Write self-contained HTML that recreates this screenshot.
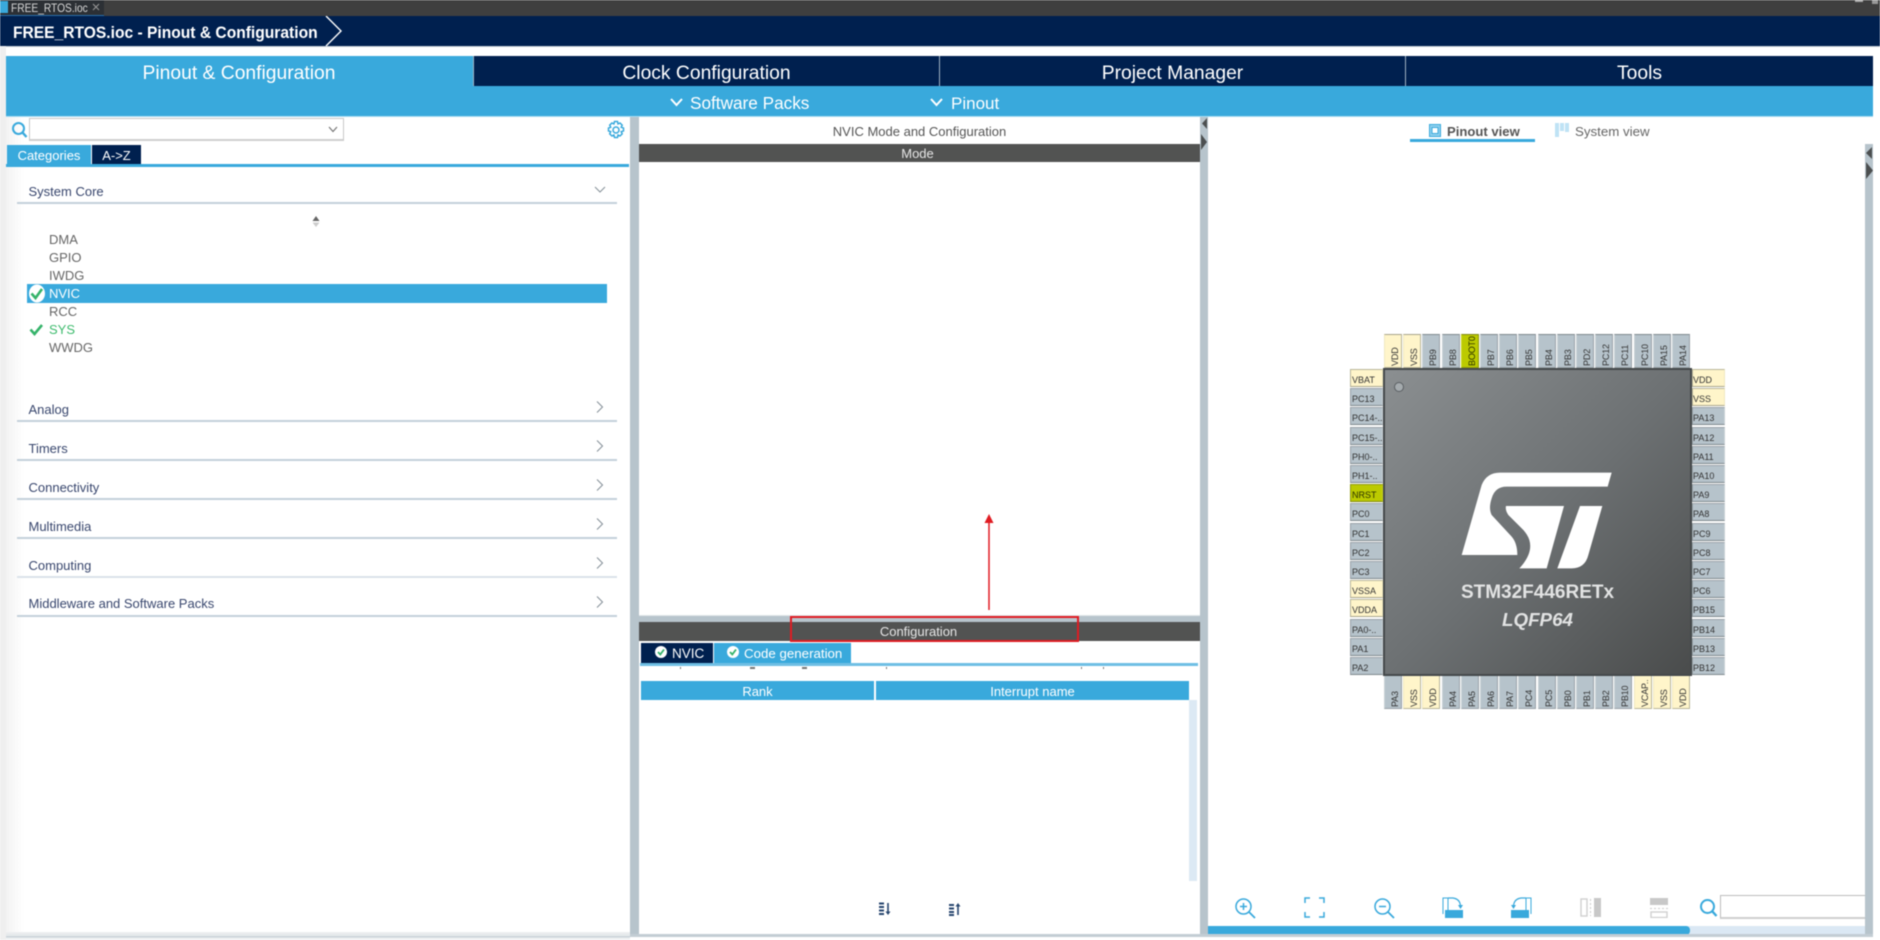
<!DOCTYPE html>
<html><head><meta charset="utf-8"><title>FREE_RTOS.ioc</title>
<style>
html,body{margin:0;padding:0;background:#fff}
body{width:1880px;height:940px;overflow:hidden;position:relative;font-family:"Liberation Sans",sans-serif}
#r{position:absolute;left:0;top:0;width:1880px;height:940px;overflow:hidden;filter:blur(.4px);background:#fff}
#r div,#r svg,#r span.a{position:absolute}
.t{white-space:nowrap;line-height:1}
.c{text-align:center}
.nav{background:#00204f;color:#fff;top:56px;height:30px;font-size:19.3px;line-height:35px;text-align:center;overflow:hidden}
.li{left:49px;font-size:13px;line-height:18px;color:#666;white-space:nowrap}
.sec{left:28.500px;font-size:13px;line-height:16px;color:#39476e;white-space:nowrap}
.ln{left:17px;width:600px;height:2px;background:#c3d0da}
.p{box-sizing:border-box;font-size:9px;color:#333;white-space:nowrap;overflow:hidden;background:#b6c3cb;border:1px solid #8a9296;border-color:#9aa3a8 #c8d0d5 #7f888d #9aa3a8}
.h{width:33px;height:18px;line-height:20px;padding-left:1px;top:calc(369px + 19.2px*var(--i))}
.l{left:1350px}.rr{left:1692px;padding-left:0}
.v{width:18px;height:34px;left:calc(1384px + 19.2px*var(--i));writing-mode:vertical-rl;transform:rotate(180deg);line-height:11px;padding-top:1px;padding-right:5px;letter-spacing:-.15px}
.tp{top:334px}.bt{top:675px}
.y{background:#fff5ca;border-color:#b9b69a #efe8c0 #a8a58c #b9b69a}
.k{background:#bcca00;border-color:#8f9a10 #c8d420 #7d8610 #8f9a10;color:#2c3200}
</style></head><body><div id="r">

<div style="left:0;top:0;width:1880px;height:16px;background:#3f3f3f"></div>
<div style="left:0;top:0;width:104px;height:15px;background:#2c3035;border-bottom:1px solid #2a6fa8;box-sizing:content-box"></div>
<div style="left:0;top:1px;width:8px;height:12px;background:#39a9dc"></div>
<div class="t" style="left:11px;top:2px;font-size:12px;color:#d8d8d8;transform-origin:0 0;transform:scaleX(.85)">FREE_RTOS.ioc</div>
<svg style="left:92px;top:3px" width="8" height="8"><path d="M1 1L7 7M7 1L1 7" stroke="#999" stroke-width="1"/></svg>
<div style="left:1855px;top:0;width:8px;height:2px;background:#aaa"></div>
<div style="left:1872px;top:0;width:6px;height:4px;background:#999"></div>

<div style="left:0;top:16px;width:1880px;height:30px;background:#00204f"></div>
<div style="left:0;top:46px;width:1880px;height:1px;background:#c5ced6"></div>
<div class="t" style="left:13px;top:24.500px;font-size:16.500px;font-weight:bold;color:#fff;transform-origin:0 0;transform:scaleX(.945)">FREE_RTOS.ioc - Pinout &amp; Configuration</div>
<svg style="left:321px;top:16px" width="24" height="30"><path d="M5 0L20 15L5 30" fill="none" stroke="#fff" stroke-width="1.400"/></svg>

<div style="left:5px;top:56px;width:468px;height:30px;background:#39a9dc;color:#fff;font-size:19.300px;line-height:35px;text-align:center;overflow:hidden">Pinout &amp; Configuration</div>
<div class="nav" style="left:473px;width:466px;border-left:1px solid #9fb2c2;box-sizing:border-box">Clock Configuration</div>
<div class="nav" style="left:940px;width:465px">Project Manager</div>
<div class="nav" style="left:1406px;width:467px">Tools</div>
<div style="left:939px;top:56px;width:1px;height:30px;background:#9fb2c2"></div>
<div style="left:1405px;top:56px;width:1px;height:30px;background:#9fb2c2"></div>
<div style="left:5px;top:86px;width:1868px;height:30px;background:#39a9dc;border-bottom:1px solid #a9dbf2"></div>
<svg style="left:669px;top:97px" width="16" height="11"><path d="M2 2L7.500 8L13 2" fill="none" stroke="#fff" stroke-width="2"/></svg>
<div class="t" style="left:690px;top:94.500px;font-size:17.200px;color:#fff">Software Packs</div>
<svg style="left:929px;top:97px" width="16" height="11"><path d="M2 2L7.500 8L13 2" fill="none" stroke="#fff" stroke-width="2"/></svg>
<div class="t" style="left:951px;top:94.500px;font-size:17px;color:#fff">Pinout</div>

<!-- left panel -->
<div style="left:0;top:46px;width:6px;height:894px;background:#efefef"></div>
<div style="left:6px;top:117px;width:18px;height:815px;background:linear-gradient(90deg,#f3f3f3,#fff)"></div>
<svg style="left:11px;top:121px" width="18" height="18"><circle cx="7.500" cy="7.500" r="5.500" fill="none" stroke="#39a9dc" stroke-width="2"/><path d="M11.500 11.500L15.500 16" stroke="#39a9dc" stroke-width="2.400"/></svg>
<div style="left:29px;top:118px;width:315px;height:23px;box-sizing:border-box;border:1px solid #c9c9c9;border-bottom:2px solid #cfcfcf;background:#fff"></div>
<svg style="left:327px;top:125px" width="12" height="9"><path d="M2 2L6 6.500L10 2" fill="none" stroke="#777" stroke-width="1.200"/></svg>
<svg style="left:606px;top:120px" width="20" height="20" viewBox="0 0 20 20"><path d="M8.500 1.500h3l.5 2.400 2-.9 2.200 2.200-1 2 2.300.8v3l-2.300.7 1 2.100-2.200 2.200-2-1-.5 2.500h-3l-.6-2.500-2 1-2.200-2.200 1-2.100-2.200-.7v-3l2.200-.8-1-2 2.200-2.200 2 .9z" fill="none" stroke="#39a9dc" stroke-width="1.500"/><circle cx="10" cy="10" r="3" fill="none" stroke="#39a9dc" stroke-width="1.500"/></svg>

<div style="left:7px;top:145px;width:84px;height:20px;background:#39a9dc;color:#fff;font-size:13px;line-height:22px;text-align:center;overflow:hidden">Categories</div>
<div style="left:92px;top:145px;width:49px;height:20px;background:#00204f;color:#fff;font-size:13px;line-height:22px;text-align:center;overflow:hidden">A-&gt;Z</div>
<div style="left:6px;top:164px;width:623px;height:3px;background:#39a9dc"></div>

<div class="sec" style="top:184px">System Core</div>
<svg style="left:593px;top:185px" width="14" height="10"><path d="M2 2L7 7L12 2" fill="none" stroke="#8a949c" stroke-width="1.100"/></svg>
<div class="ln" style="top:202px"></div>
<svg style="left:312px;top:216px" width="8" height="12"><path d="M4 0L7.500 5H.5z" fill="#666"/><path d="M4 11L7.500 6.500H.5z" fill="#ccc"/></svg>

<div class="li" style="top:231px">DMA</div>
<div class="li" style="top:249px">GPIO</div>
<div class="li" style="top:267px">IWDG</div>
<div style="left:27px;top:284px;width:580px;height:19px;background:#39a9dc;border:0"></div>
<svg style="left:28px;top:284px" width="18" height="19"><ellipse cx="9" cy="9.500" rx="8" ry="9" fill="#fff"/><path d="M3.500 9.500L7.500 14L14 5" fill="none" stroke="#35b36a" stroke-width="2.600"/></svg>
<div class="li" style="top:285px;color:#fff">NVIC</div>
<div class="li" style="top:303px">RCC</div>
<svg style="left:29px;top:323px" width="15" height="13"><path d="M1.500 6.500L5.500 11L13 2" fill="none" stroke="#35b36a" stroke-width="2.600"/></svg>
<div class="li" style="top:321px;color:#3dbb6d">SYS</div>
<div class="li" style="top:339px">WWDG</div>

<div class="sec" style="top:401.500px">Analog</div>
<div class="ln" style="top:420px"></div>
<div class="sec" style="top:440.500px">Timers</div>
<div class="ln" style="top:459px"></div>
<div class="sec" style="top:479.500px">Connectivity</div>
<div class="ln" style="top:498px"></div>
<div class="sec" style="top:518.500px">Multimedia</div>
<div class="ln" style="top:537px"></div>
<div class="sec" style="top:557.500px">Computing</div>
<div class="ln" style="top:576px;background:#dbe3ea"></div>
<div class="sec" style="top:596px">Middleware and Software Packs</div>
<div class="ln" style="top:615px"></div>
<svg style="left:595px;top:400px" width="10" height="14"><path d="M2 1.500L7.500 7L2 12.500" fill="none" stroke="#8a949c" stroke-width="1.100"/></svg>
<svg style="left:595px;top:439px" width="10" height="14"><path d="M2 1.500L7.500 7L2 12.500" fill="none" stroke="#8a949c" stroke-width="1.100"/></svg>
<svg style="left:595px;top:478px" width="10" height="14"><path d="M2 1.500L7.500 7L2 12.500" fill="none" stroke="#8a949c" stroke-width="1.100"/></svg>
<svg style="left:595px;top:517px" width="10" height="14"><path d="M2 1.500L7.500 7L2 12.500" fill="none" stroke="#8a949c" stroke-width="1.100"/></svg>
<svg style="left:595px;top:556px" width="10" height="14"><path d="M2 1.500L7.500 7L2 12.500" fill="none" stroke="#8a949c" stroke-width="1.100"/></svg>
<svg style="left:595px;top:595px" width="10" height="14"><path d="M2 1.500L7.500 7L2 12.500" fill="none" stroke="#8a949c" stroke-width="1.100"/></svg>

<!-- splitters -->
<div style="left:630px;top:117px;width:9px;height:817px;background:#b7c4cc"></div>
<div style="left:1200px;top:117px;width:8px;height:817px;background:#b7c4cc"></div>
<div style="left:1865px;top:144px;width:8px;height:790px;background:#b7c4cc"></div>
<svg style="left:1201px;top:118px" width="7" height="34"><path d="M6 0V11L1 5.500z" fill="#4c4f50"/><path d="M0 16V32L6 24z" fill="#4c4f50"/></svg>
<svg style="left:1866px;top:147px" width="7" height="34"><path d="M6 0V12L0 6z" fill="#4c4f50"/><path d="M0 15V32L7 23.500z" fill="#4c4f50"/></svg>

<!-- center -->
<div class="t c" style="left:639px;width:561px;top:124.500px;font-size:13px;color:#555">NVIC Mode and Configuration</div>
<div style="left:639px;top:144px;width:561px;height:18px;background:#525352;color:#e6e6e6;font-size:13px;line-height:20px;text-align:center;overflow:hidden;padding-right:4px;box-sizing:border-box">Mode</div>
<div style="left:639px;top:615px;width:561px;height:7px;background:#b7c4cc;border-top:1px solid #e0e5e8;box-sizing:border-box"></div>
<div style="left:639px;top:622px;width:561px;height:19px;background:#525352;color:#e6e6e6;font-size:13px;line-height:20px;text-align:center;padding-right:2px;box-sizing:border-box">Configuration</div>
<div style="left:790px;top:616px;width:289px;height:26px;box-sizing:border-box;border:2px solid #e01b22"></div>
<svg style="left:980px;top:510px" width="18" height="102"><path d="M9 10V100" stroke="#e01b22" stroke-width="1.500"/><path d="M9 4L13.500 13H4.500z" fill="#e01b22"/></svg>

<div style="left:641px;top:643px;width:72px;height:21px;background:#00204f;color:#fff;font-size:13.500px;line-height:21px;padding-left:31px;box-sizing:border-box">NVIC</div>
<div style="left:714px;top:643px;width:137px;height:21px;background:#39a9dc;color:#fff;font-size:13.300px;line-height:21px;padding-left:30px;box-sizing:border-box">Code generation</div>
<svg style="left:654px;top:645px" width="14" height="14"><circle cx="7" cy="7" r="6" fill="#fff"/><path d="M4 7L6.300 9.500L10 4.500" fill="none" stroke="#35b36a" stroke-width="1.800"/></svg>
<svg style="left:726px;top:645px" width="14" height="14"><circle cx="7" cy="7" r="6" fill="#fff"/><path d="M4 7L6.300 9.500L10 4.500" fill="none" stroke="#35b36a" stroke-width="1.800"/></svg>
<div style="left:640px;top:663px;width:558px;height:3px;background:#6fbfe4"></div>
<div style="left:680px;top:667px;width:1px;height:2px;background:#777"></div>
<div style="left:750px;top:667px;width:5px;height:2px;background:#777"></div>
<div style="left:802px;top:667px;width:5px;height:2px;background:#777"></div>
<div style="left:886px;top:667px;width:1px;height:2px;background:#777"></div>
<div style="left:1081px;top:667px;width:1px;height:2px;background:#777"></div>
<div style="left:1103px;top:667px;width:1px;height:2px;background:#777"></div>

<div style="left:641px;top:681px;width:233px;height:19px;background:#39a9dc;color:#fff;font-size:13px;line-height:22px;text-align:center;overflow:hidden">Rank</div>
<div style="left:876px;top:681px;width:313px;height:19px;background:#39a9dc;color:#fff;font-size:13px;line-height:22px;text-align:center;overflow:hidden">Interrupt name</div>
<div style="left:1189px;top:700px;width:8px;height:181px;background:#dce9f4"></div>
<svg style="left:878px;top:902px" width="14" height="14"><path d="M1 1.500H6M1 5H6M1 8.500H6M1 12H6" stroke="#26456e" stroke-width="2"/><path d="M10 1V11" stroke="#26456e" stroke-width="1.600"/><path d="M7.500 9.500H12.500L10 13z" fill="#26456e"/></svg>
<svg style="left:948px;top:902px" width="14" height="14"><path d="M1 3H6M1 6.500H6M1 10H6M1 13H6" stroke="#26456e" stroke-width="2"/><path d="M10 3V13" stroke="#26456e" stroke-width="1.600"/><path d="M7.500 4.500H12.500L10 1z" fill="#26456e"/></svg>

<!-- right tabs -->
<svg style="left:1428px;top:123px" width="14" height="15"><rect x="1.500" y="1.500" width="11" height="12" fill="#8fd0ee" stroke="#39a9dc"/><rect x="4" y="4.500" width="6" height="6" fill="#fff" stroke="#39a9dc"/></svg>
<div class="t" style="left:1447px;top:124.500px;font-size:13.100px;font-weight:bold;color:#555">Pinout view</div>
<div style="left:1410px;top:139px;width:125px;height:3px;background:#39a9dc"></div>
<svg style="left:1555px;top:123px" width="15" height="15"><rect x="0" y="0" width="4" height="14" fill="#bfe3f5"/><rect x="5" y="0" width="4" height="8" fill="#bfe3f5"/><rect x="10" y="0" width="4" height="9" fill="#bfe3f5"/></svg>
<div class="t" style="left:1575px;top:124.500px;font-size:13.300px;color:#666">System view</div>

<!-- pins -->
<div class="p v tp y" style="--i:0">VDD</div><div class="p v tp y" style="--i:1">VSS</div><div class="p v tp" style="--i:2">PB9</div><div class="p v tp" style="--i:3">PB8</div><div class="p v tp k" style="--i:4">BOOT0</div><div class="p v tp" style="--i:5">PB7</div><div class="p v tp" style="--i:6">PB6</div><div class="p v tp" style="--i:7">PB5</div><div class="p v tp" style="--i:8">PB4</div><div class="p v tp" style="--i:9">PB3</div><div class="p v tp" style="--i:10">PD2</div><div class="p v tp" style="--i:11">PC12</div><div class="p v tp" style="--i:12">PC11</div><div class="p v tp" style="--i:13">PC10</div><div class="p v tp" style="--i:14">PA15</div><div class="p v tp" style="--i:15">PA14</div>
<div class="p v bt" style="--i:0">PA3</div><div class="p v bt y" style="--i:1">VSS</div><div class="p v bt y" style="--i:2">VDD</div><div class="p v bt" style="--i:3">PA4</div><div class="p v bt" style="--i:4">PA5</div><div class="p v bt" style="--i:5">PA6</div><div class="p v bt" style="--i:6">PA7</div><div class="p v bt" style="--i:7">PC4</div><div class="p v bt" style="--i:8">PC5</div><div class="p v bt" style="--i:9">PB0</div><div class="p v bt" style="--i:10">PB1</div><div class="p v bt" style="--i:11">PB2</div><div class="p v bt" style="--i:12">PB10</div><div class="p v bt y" style="--i:13">VCAP..</div><div class="p v bt y" style="--i:14">VSS</div><div class="p v bt y" style="--i:15">VDD</div>
<div class="p h l y" style="--i:0">VBAT</div><div class="p h l" style="--i:1">PC13</div><div class="p h l" style="--i:2">PC14-..</div><div class="p h l" style="--i:3">PC15-..</div><div class="p h l" style="--i:4">PH0-..</div><div class="p h l" style="--i:5">PH1-..</div><div class="p h l k" style="--i:6">NRST</div><div class="p h l" style="--i:7">PC0</div><div class="p h l" style="--i:8">PC1</div><div class="p h l" style="--i:9">PC2</div><div class="p h l" style="--i:10">PC3</div><div class="p h l y" style="--i:11">VSSA</div><div class="p h l y" style="--i:12">VDDA</div><div class="p h l" style="--i:13">PA0-..</div><div class="p h l" style="--i:14">PA1</div><div class="p h l" style="--i:15">PA2</div>
<div class="p h rr y" style="--i:0">VDD</div><div class="p h rr y" style="--i:1">VSS</div><div class="p h rr" style="--i:2">PA13</div><div class="p h rr" style="--i:3">PA12</div><div class="p h rr" style="--i:4">PA11</div><div class="p h rr" style="--i:5">PA10</div><div class="p h rr" style="--i:6">PA9</div><div class="p h rr" style="--i:7">PA8</div><div class="p h rr" style="--i:8">PC9</div><div class="p h rr" style="--i:9">PC8</div><div class="p h rr" style="--i:10">PC7</div><div class="p h rr" style="--i:11">PC6</div><div class="p h rr" style="--i:12">PB15</div><div class="p h rr" style="--i:13">PB14</div><div class="p h rr" style="--i:14">PB13</div><div class="p h rr" style="--i:15">PB12</div>

<!-- chip -->
<div style="left:1383px;top:368px;width:309px;height:308px;box-sizing:border-box;border:2px solid #45494b;background:linear-gradient(135deg,#8b8f91 0%,#6d7173 50%,#4a4c4c 100%)"></div>
<div style="left:1394px;top:382px;width:8px;height:8px;border-radius:50%;background:#a5abae;border:1px solid #5a5f62"></div>
<svg style="left:1440px;top:440px" width="200" height="140" viewBox="0 0 600 420">
<path d="M515 98L180 98Q140 98 125 135L65 345L232 345Q232 310 215 290L155 225Q145 205 155 175Q165 140 200 140L503 140Z" fill="#fff"/>
<path d="M198 198L372 198L320 385L238 385Q280 340 268 300Q262 280 240 260L205 225Q195 210 198 198Z" fill="#fff"/>
<path d="M420 198L487 198L445 345Q435 385 395 385L352 385Z" fill="#fff"/></svg>
<div class="t c" style="left:1383px;width:309px;top:582.500px;font-size:19px;font-weight:bold;color:#e2e3e3">STM32F446RETx</div>
<div class="t c" style="left:1383px;width:309px;top:610.500px;font-size:18.800px;font-weight:bold;font-style:italic;color:#e2e3e3">LQFP64</div>

<!-- bottom toolbar -->
<svg style="left:1234px;top:897px" width="24" height="23"><circle cx="9.500" cy="9.500" r="7.500" fill="none" stroke="#39a9dc" stroke-width="1.500"/><path d="M15 15L21 21" stroke="#39a9dc" stroke-width="1.800"/><path d="M6 9.500H13M9.500 6V13" stroke="#39a9dc" stroke-width="1.500"/></svg>
<svg style="left:1304px;top:897px" width="21" height="21"><path d="M1 6V1H6M15 1H20V6M20 15V20H15M6 20H1V15" fill="none" stroke="#39a9dc" stroke-width="1.500"/></svg>
<svg style="left:1373px;top:897px" width="24" height="23"><circle cx="9.500" cy="9.500" r="7.500" fill="none" stroke="#39a9dc" stroke-width="1.500"/><path d="M15 15L21 21" stroke="#39a9dc" stroke-width="1.800"/><path d="M6 9.500H13" stroke="#39a9dc" stroke-width="1.500"/></svg>
<svg style="left:1442px;top:897px" width="22" height="22"><path d="M1 17V1H6V13" fill="none" stroke="#39a9dc"/><path d="M6 1H11Q18 2 18.500 9" fill="none" stroke="#39a9dc" stroke-width="1.200"/><path d="M16 8H21L18.500 12z" fill="#39a9dc"/><rect x="3" y="13" width="18" height="8" fill="#39a9dc"/></svg>
<svg style="left:1510px;top:897px" width="22" height="22"><path d="M21 17V1H16V13" fill="none" stroke="#39a9dc"/><path d="M16 1H11Q4 2 3.500 9" fill="none" stroke="#39a9dc" stroke-width="1.200"/><path d="M1 8H6L3.500 12z" fill="#39a9dc"/><rect x="1" y="13" width="18" height="8" fill="#39a9dc"/></svg>
<svg style="left:1580px;top:898px" width="22" height="20"><rect x="1" y="1" width="6" height="17" fill="none" stroke="#d0d0d0" stroke-width="1.400"/><path d="M10.500 1V18" stroke="#ccc" stroke-dasharray="2 2"/><rect x="14" y="0" width="7" height="19" fill="#c8c8c8"/></svg>
<svg style="left:1650px;top:898px" width="20" height="20"><rect x="0" y="0" width="18" height="7" fill="#c8c8c8"/><path d="M0 10.500H18" stroke="#ccc" stroke-dasharray="2 2"/><rect x="1" y="14" width="16" height="5.500" fill="none" stroke="#d0d0d0" stroke-width="1.400"/></svg>
<svg style="left:1699px;top:898px" width="20" height="20"><circle cx="8.500" cy="8.500" r="6.500" fill="none" stroke="#39a9dc" stroke-width="2"/><path d="M13 13L17.500 18" stroke="#39a9dc" stroke-width="2.400"/></svg>
<div style="left:1720px;top:895px;width:145px;height:24px;box-sizing:border-box;border:1px solid #bdbdbd;border-right:0;border-bottom:2px solid #cfcfcf;background:#fff"></div>
<div style="left:1208px;top:926px;width:657px;height:9px;background:#dbe8f4"></div>
<div style="left:1208px;top:926px;width:482px;height:9px;background:#39a9dc;border-radius:0 4px 4px 0"></div>

<div style="left:6px;top:932px;width:624px;height:8px;background:linear-gradient(#eef0f1,#e3e7ea 50%,#bcc8d0 60%,#f0f2f3 75%)"></div>
<div style="left:630px;top:934px;width:1243px;height:3px;background:#c3cdd4"></div>
</div></body></html>
